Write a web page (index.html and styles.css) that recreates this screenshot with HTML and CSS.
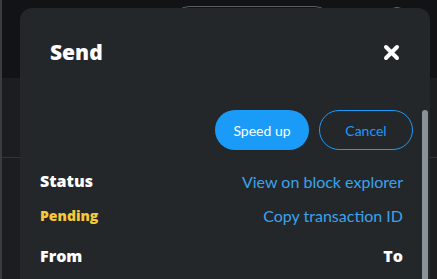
FILE: index.html
```html
<!DOCTYPE html>
<html lang="en">
<head>
    <meta charset="UTF-8">
    <meta name="viewport" content="width=device-width, initial-scale=1.0">
    <title>Send</title>
    <link rel="stylesheet" href="styles.css">
</head>
<body>
    <div class="page">
        <div class="topbar">
            <div class="network-pill"></div>
            <div class="account-dot"></div>
        </div>
        <div class="page-body">
            <div class="divider"></div>
        </div>
    </div>

    <div class="modal">
        <div class="modal-header">
            <h1>Send</h1>
            <button class="close-button" aria-label="Close">
                <svg width="17" height="17" viewBox="0 0 17 17">
                    <path d="M3 3 L14 14 M14 3 L3 14" stroke="#fff" stroke-width="4" stroke-linecap="round"/>
                </svg>
            </button>
        </div>

        <div class="modal-body">
            <div class="content">
                <div class="actions">
                    <button class="btn btn-primary">Speed up</button>
                    <button class="btn btn-secondary">Cancel</button>
                </div>

                <div class="row">
                    <span class="label">Status</span>
                    <a class="link">View on block explorer</a>
                </div>
                <div class="row row-small">
                    <span class="pending">Pending</span>
                    <a class="link">Copy transaction ID</a>
                </div>
                <div class="row row-from">
                    <span class="label">From</span>
                    <span class="label">To</span>
                </div>
            </div>
            <div class="scrollbar"></div>
        </div>
    </div>
</body>
</html>
```

FILE: styles.css
```css
body {
    margin: 0;
    padding: 0;
    font-family: 'Lato', 'Liberation Sans', sans-serif;
    background-color: #1c1d1f;
    width: 437px;
    height: 279px;
    overflow: hidden;
}

.page {
    height: 100%;
    border-left: 2px solid #3a3c3f;
    display: flex;
    flex-direction: column;
}

.topbar {
    height: 78px;
    background-color: #111315;
    position: relative;
}

.network-pill {
    position: absolute;
    left: 171px;
    top: 6px;
    width: 156px;
    height: 30px;
    border: 1px solid #5a5e63;
    border-radius: 16px;
}

.account-dot {
    position: absolute;
    left: 386px;
    top: 7px;
    width: 14px;
    height: 14px;
    border: 2px solid #1a7fd0;
    border-radius: 50%;
}

.page-body {
    flex: 1;
    padding-top: 79px;
}

.divider {
    height: 1px;
    background-color: #323437;
}

.modal {
    position: absolute;
    left: 20px;
    top: 8px;
    width: 410px;
    height: 300px;
    background-color: #24272a;
    border-radius: 12px 12px 0 0;
    display: flex;
    flex-direction: column;
}

.modal-header {
    display: flex;
    justify-content: space-between;
    align-items: center;
    padding: 30px 30px 0 30px;
}

h1 {
    margin: 0;
    color: #fff;
    font-family: 'Open Sans', 'Lato', sans-serif;
    font-size: 21px;
    font-weight: 800;
    line-height: 28px;
}

.close-button {
    background: none;
    border: none;
    padding: 0;
    width: 17px;
    height: 17px;
    cursor: pointer;
}

.modal-body {
    display: flex;
    padding: 0 2px 0 20px;
    flex: 1;
}

.content {
    flex: 1;
}

.scrollbar {
    width: 6px;
    margin: 44px 0 0 19px;
    background-color: #8b9199;
    border-radius: 3px;
}

.actions {
    display: flex;
    justify-content: flex-end;
    gap: 10px;
    margin: 44px -10px 0 0;
}

.btn {
    font-family: 'Lato', 'Liberation Sans', sans-serif;
    font-size: 14px;
    width: 94px;
    height: 40px;
    border-radius: 20px;
    cursor: pointer;
}

.btn-primary {
    background-color: #1a9bf8;
    border: none;
    color: #fff;
}

.btn-secondary {
    background: none;
    border: 1px solid #1a9bf8;
    color: #1a9bf8;
}

.row {
    display: flex;
    justify-content: space-between;
    align-items: center;
    height: 34px;
    margin-top: 14px;
}

.row-small {
    margin-top: 0;
}

.row-from {
    margin-top: 7px;
}

.label {
    color: #fff;
    font-family: 'Open Sans', 'Lato', sans-serif;
    font-size: 16px;
    font-weight: 800;
}

.pending {
    color: #f8c93a;
    font-family: 'Open Sans', 'Lato', sans-serif;
    font-size: 14px;
    font-weight: 800;
}

.link {
    color: #3ba3ec;
    font-size: 16px;
    cursor: pointer;
}
```
